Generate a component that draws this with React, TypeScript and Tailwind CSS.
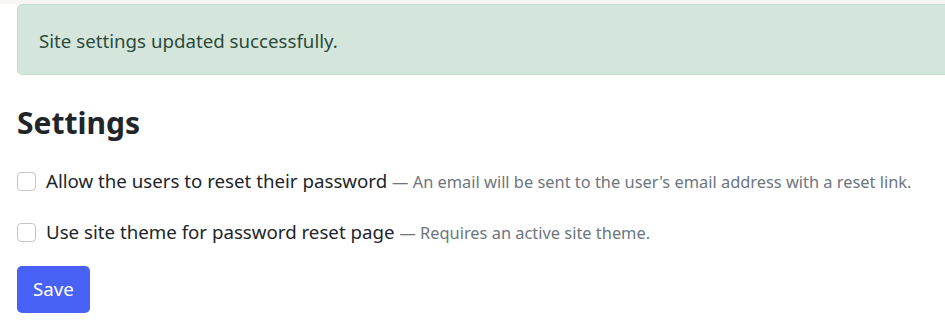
export default function App() {
  return (
    <div
      className="h-[328px] w-[945px] overflow-hidden bg-white text-[18.7px] text-[#212529]"
      style={{ fontFamily: '"Noto Sans", "Open Sans", sans-serif' }}
    >
      <div className="h-[4px] bg-[#f7f6f5]" />
      <div className="pl-[17px]">
        {/* Alert */}
        <div className="-mr-[12px] flex h-[71px] items-center rounded-[5px] border border-[#c3dccd] bg-[#d4e6dc] px-[21px] pt-[3px] text-[#2d4a3a]">
          Site settings updated successfully.
        </div>

        <h1 className="mt-[25px] text-[30px] font-bold leading-[46px] text-[#212529]">Settings</h1>

        <div className="mt-[23px] flex flex-col gap-[26px]">
          <label className="flex items-center gap-[10px] leading-[24px]">
            <input
              type="checkbox"
              className="h-[19px] w-[19px] appearance-none rounded-[4px] border border-[#c6c6c6] bg-white"
            />
            <span>
              Allow the users to reset their password{" "}
              <span className="text-[16.4px] text-[#6c757d]">— An email will be sent to the user's email address with a reset link.</span>
            </span>
          </label>
          <label className="flex items-center gap-[10px] leading-[24px]">
            <input
              type="checkbox"
              className="h-[19px] w-[19px] appearance-none rounded-[4px] border border-[#c6c6c6] bg-white"
            />
            <span>
              Use site theme for password reset page{" "}
              <span className="text-[16.4px] text-[#6c757d]">— Requires an active site theme.</span>
            </span>
          </label>
        </div>

        <button className="mt-[21px] h-[47px] w-[73px] rounded-[5px] bg-[#4862f7] text-[18.7px] text-white">
          Save
        </button>
      </div>
    </div>
  );
}
